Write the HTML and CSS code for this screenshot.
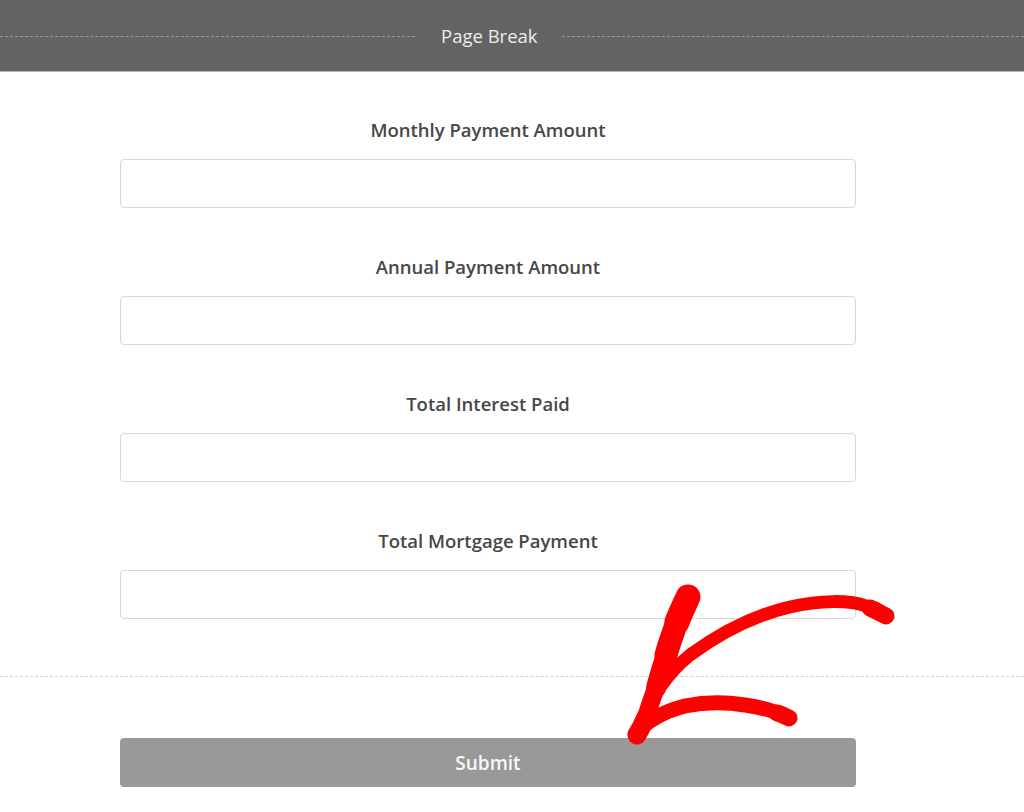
FILE: index.html
```html
<!DOCTYPE html>
<html lang="en">
<head>
<meta charset="utf-8">
<title>Mortgage form</title>
<link rel="stylesheet" href="styles.css">
</head>
<body>
<header class="page-break">
  <span class="pb-line"></span>
  <span class="pb-title">Page Break</span>
  <span class="pb-line"></span>
</header>
<main class="form">
  <div class="fields">
    <div class="field">
      <label class="field-label">Monthly Payment Amount</label>
      <div class="field-input"></div>
    </div>
    <div class="field">
      <label class="field-label">Annual Payment Amount</label>
      <div class="field-input"></div>
    </div>
    <div class="field">
      <label class="field-label">Total Interest Paid</label>
      <div class="field-input"></div>
    </div>
    <div class="field">
      <label class="field-label">Total Mortgage Payment</label>
      <div class="field-input"></div>
    </div>
  </div>
  <div class="divider"></div>
  <div class="submit-row">
    <button class="submit-btn" type="button">Submit</button>
  </div>
</main>
<svg class="arrow" width="1024" height="812" viewBox="0 0 1024 812" aria-hidden="true">
  <g fill="none" stroke="#ff0000" stroke-linecap="round" stroke-linejoin="round">
    <path d="M884 616 C877 612 872 608 866 606 C850 600 820 600 790 607 C755 615 720 633 690 655 C665 675 650 700 640 727" stroke-width="13"/>
    <path d="M886 616 C880 613 875 610 870 608" stroke-width="17"/>
    <path d="M688 597 C684 606 680 614 677 622" stroke-width="25"/>
    <path d="M677 622 C673 633 669 644 666 655" stroke-width="23"/>
    <path d="M666 655 C662 666 659 677 656 688" stroke-width="20"/>
    <path d="M656 688 C652 698 649 708 646 717" stroke-width="18"/>
    <path d="M646 717 C643 724 640 730 637 735" stroke-width="19"/>
    <path d="M786 717 C775 711 760 707 745 705 C725 702 705 702 685 706 C665 711 648 720 635 734" stroke-width="15"/>
    <path d="M789 718 C785 716 781 714 777 713" stroke-width="17"/>
  </g>
</svg>
</body>
</html>
```
FILE: styles.css
```css
html, body {
  margin: 0;
  padding: 0;
  background: #ffffff;
}
body {
  font-family: "Open Sans", "Noto Sans", "Liberation Sans", sans-serif;
  width: 1024px;
  height: 812px;
  overflow: hidden;
  position: relative;
}
.page-break {
  height: 71px;
  background: #636363;
  border-bottom: 1px solid #b5b5b5;
  display: grid;
  grid-template-columns: 415px auto 1fr;
  align-items: center;
}
.pb-line {
  display: block;
  height: 0;
  border-top: 1px dashed #9c9c9c;
  margin-top: 1px;
}
.pb-title {
  color: #ececec;
  font-size: 18.5px;
  line-height: 24px;
  padding: 0 24px 0 26px;
}
.form {
  display: flex;
  flex-direction: column;
}
.fields {
  display: flex;
  flex-direction: column;
  gap: 47px;
  padding: 46px 168px 0 120px;
}
.field {
  display: flex;
  flex-direction: column;
  gap: 17px;
}
.field-label {
  display: block;
  text-align: center;
  font-size: 18.5px;
  font-weight: 600;
  line-height: 24px;
  color: #474747;
}
.field-input {
  height: 47px;
  border: 1px solid #d8d8d8;
  border-radius: 4px;
  background: #fff;
}
.divider {
  margin-top: 57px;
  border-top: 1px dashed #d2d2d2;
}
.submit-row {
  padding: 61px 168px 0 120px;
}
.submit-btn {
  display: block;
  width: 100%;
  height: 49px;
  border: 0;
  border-radius: 4px;
  background: #999999;
  color: #f7f7f7;
  font-family: "Open Sans", "Noto Sans", "Liberation Sans", sans-serif;
  font-size: 19px;
  font-weight: 600;
  padding: 0;
}
.arrow {
  position: absolute;
  left: 0;
  top: 0;
  pointer-events: none;
}
```
